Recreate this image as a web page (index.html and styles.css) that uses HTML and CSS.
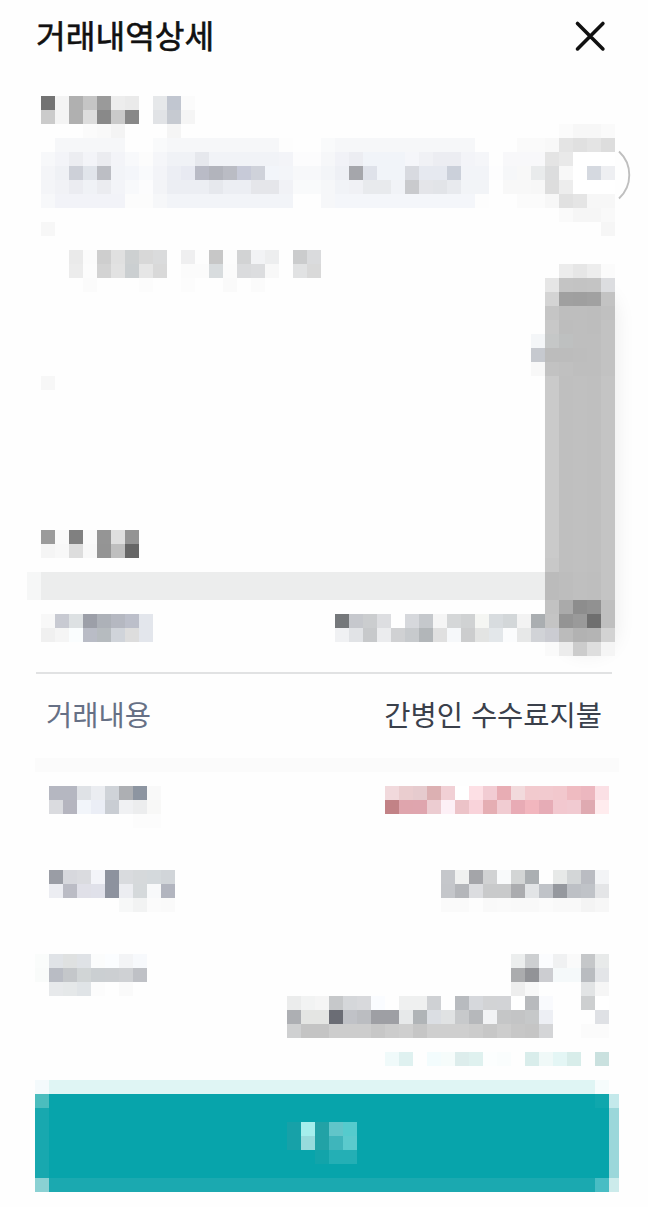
FILE: index.html
```html
<!DOCTYPE html>
<html lang="ko">
<head>
<meta charset="utf-8">
<title>거래내역상세</title>
<link rel="stylesheet" href="styles.css">
</head>
<body>
<main class="sheet">
  <header class="header">
    <h1 class="title">거래내역상세</h1>
    <svg class="close" viewBox="0 0 32 32" role="img" aria-label="닫기"><path d="M3.5 3.5 28.9 28.9M28.9 3.5 3.5 28.9"/></svg>
  </header>

  <section class="account">
    <svg class="mosaic" data-cells="73 f4 b0 c5 9a ed ea . e6e8ea c1c6d0 fb/cb f4 b0 dd 89 ca 88 . e1e3e6 c6cad1 f5/. . . fb f9 f4 . . . f5 ."></svg>
    <svg class="mosaic" data-cells="fb f7*2 fa"></svg>
  </section>

  <section class="tabs">
    <svg class="mosaic" data-cells=". f6f7f9*5 . . f9fafb f6f7f9*8 fd . . f9fafb f6f7f9*10 . . . fa*2 f8 e4 e0 e4 dd/f7f8fa f3f4f8 ecedf1 f3f4f8 ebecf0 f3f4f8 f8f9fb fc f5f6f9 f0f2f6*2 e6e8ed f1f3f7*5 f3f4f8 fcfcfd*2 f6f7f9 f1f2f7 ecedf2 f1f4f9*3 f5f6fa f0f1f5 ecedf2*2 f3f4f8 f5f6f9 . f8f8fa*3 e4 e9 ff*3/f4f5f8 eff1f5 cdd0d8 e1e5eb bcbec4 f2f4f8 f4f6fa f9fafc f3f4f8 eceef4 e8eaf2 b9bbc6 b2b4bc babcc4 c7cad8 cfd2da f2f5fa f3f5f9 f7f8fa*2 f3f5f8 eef0f5 a5a6ab dfe2ea f1f4f9*2 d8dae0 e6e9f0*2 cbd0da f2f4f8*2 fdfdfe f6f7f9 f8 e9ebec dcddde f8 ff d5d9e0 eeeff2/f4f5f8 f1f2f6 ebecf1 f0f2f6 ebecf0 f3f4f8 f8f9fb fcfcfd f3f4f7 eceef3*3 e6e8ed eceef3*2 e5e6ea*2 f1f2f6 f9fafb*2 f6f7f9 f1f3f7 f0f1f5 e8eaed*2 f1f3f7 c9cacd e4e5e9 e2e4e8 e8eaee f2f4f7*2 . f8*2 f7 dd ed ff*3/f7f8fa f2f3f8*5 fc*2 f6f7f9 f2f4f8*9 . . f6f7f9 f4f6fa*10 fd . . fb*2 f7 e1 e5 f7*2/.*37 fa f6*2 f9/f7 .*39 f6"></svg>
    <svg class="knob" viewBox="0 0 14 52" aria-hidden="true"><path d="M1 2.5A32 32 0 0 1 1 49.5"/></svg>
  </section>

  <section class="history">
    <svg class="mosaic chips" data-cells="ea fb ce e0 cdd0d1 d8 dadbdc . efeff0 fd c7 fc d2d3d4 f2f3f5 edeeef . cbcccd dadbdd/ec fc d3 e2 cbcfd1 e6 d9 . fb fb d8dcde fb dadbdd dcdddf f8 . e1e2e3 d9/. fb .*3 fc . . fc . . fa . fb .*4"></svg>
    <div class="amount">
      <svg class="mosaic" data-cells="./f7"></svg>
      <svg class="mosaic" data-cells="f4f6f8/c6c9cf/f8/."></svg>
    </div>
    <svg class="mosaic subtitle" data-cells="9b fa 80 fa 95 df 94/f5 f8 dd f8 94 bf 66"></svg>
  </section>

  <div class="band"></div>

  <section class="summary">
    <svg class="mosaic" data-cells="f8 c8cad2 dde1e3 9c9fa8 adb1b8 b5b8c1 bcbfca e3e6ec/f0 f5 fafdfe b9bcc6 b6bbbf d0d4da dd e3e6ec"></svg>
    <svg class="mosaic" data-cells="75787b c6c8cd cbcdcf dddee1 . d6d8dc c5c8cc f5 d5d7d8 d0d2d3 f5f6f3 d8dcdf d3d7d9 f3 aaaeb1/f0f1f3 e1e3e6 c7c9cb ebecee d0d1d3 c7cacd b2b6b9 e0 f6f8fa cccdce e3e4e3 e3e7ea fbfcfd e7e8e8 d1d3d7"></svg>
  </section>

  <div class="row memo">
    <span class="label">거래내용</span>
    <span class="value">간병인 수수료지불</span>
  </div>
  <div class="rule"></div>

  <div class="row">
    <svg class="mosaic" data-cells="b5b7c1*2 dfe2e6 ebedf1 cfd3d8 adafb3 8d95a1 f9/dadbdf b5b5bf f2f5fa ebeef6 c9cdd3 f0f1f3 ecedee f8f8f7/.*6 fc fc"></svg>
    <svg class="mosaic" data-cells="f1d9dc eacdcf e6cbce dcb0b2 f1d0d5 ff fde0e5 f2ccd3 e8adb4 f2dadc f2cace f2cacf f2c8cd efbbc1 ecb7bf fbe0e5/c28286 dfa5ad dfa5ae ecccd1 fdf0f6 ecc3c8 f9d3da e5aeb3 f1ccd2 e8abb5 f2b6be e6acb6 f2c8cf f1cad1 dfaab1 ffecee"></svg>
  </div>
  <div class="row">
    <svg class="mosaic" data-cells="9a9da5 d7d8dd dadbdf f3f4f9 8d929e d9dbde d6d9db d4d9dc d1d5d9/ecedf2 bbbcc5 e0e0e8 e0e1ea 8d929e ecedf1 d5d9db f8f9fa b2b5bf/.*5 f7f8f8 f2f3f3 fb fa"></svg>
    <svg class="mosaic" data-cells="c5c7cb f0f1f0 a4a5a9 d1d2d3 f9fafb d3d5d5 abafb2 . e7e9e8 d3d6d7 babcc2 f3f4f6/c4c6ca b4b6ba dcdde0 c9cacb*2 abacaf e2e4e6 c0c3c8 95989e bdc0c5 c0c3c8 e4e5e7/fa*2 fd f9 fa f9*2 fb f9*2 f4 f7"></svg>
  </div>
  <div class="row last">
    <svg class="mosaic outset" data-cells="fafcfb e0e3e7 dfe1e1 dfe2e6 fbfcfc fbfdff f3f4f6 f7f9fc/f9fbfa b9bcc4 c4c7ca d1d5d6 cbcfd2 cccfd2 cfd1d4 bfc1c6/. e7e9eb e5e8e9 e0e4e7 fc . fa ."></svg>
    <div class="stack">
      <svg class="mosaic" data-cells="eceeee cdcfd1 fbfcfe f0f1f2 fa c5c7c9 e8eaea/abacae 929397 cccdd1 f5f9fa*2 b9bcc0 e3e5e8/ee f8 .*3 e2e4e5 f6"></svg>
      <svg class="mosaic" data-cells="ebecec f2f3f3 f5 c6c8ca d5d7da d8d9dc fafcff . eff0f0*2 cfd1d4 . b8bbbf d6d8dc d2d3d5 d2d3d6 ff b8babd f9fafd . . cdcfd0 ff/adafb3 e4e5e3*2 6b6d75 c0c2c7 bbbdc1 9e9fa4*2 e7e9ea b0b4b7 dbdee3 e0e2e3 c7c9cb b6b8bb f2f3f5 c5c6c7 c3c4c5 c6c8c9 edeff4 .*3 dfe1e5/cfd0d1 c4*2 cd*3 c7 cc cf c6 cf*3 cc c7 cd c7 c5 d4d5d7 . . fb*2"></svg>
      <svg class="mosaic link" data-cells="f0fafa dff1f0 . f3fcfd f6fcfb ddedec dff1ef fcfefe fafdfd . d9edeb f0f9f8 e4f6f5 d8edea . cae1df"></svg>
    </div>
  </div>

  <div class="confirm">
    <svg class="mosaic" data-width="584" data-cells="f4fafc dff5f4*39 f6fcfc ./4bbdbe 07a4ab*39 0fa7ad c4e9eb/18a8af 07a4ab*40 9bd7da/18a8af 07a4ab*17 17a1a8 a5eeec 22a2a6 61c5c9 55cbcd 07a4ab*18 9bd7da/18a8af 07a4ab*17 17a1a8 97dbdc 22a2a6 3fb5bb 5bcacd 07a4ab*18 9bd7da/18a8af 07a4ab*19 12a4aa 24afb5*2 07a4ab*18 9bd7da/18a8af 07a4ab*40 9bd7da/8ad1d3 1ba9b0*39 48bdc4 ccebeb"></svg>
  </div>

  <div class="handle">
    <svg class="mosaic" data-cells=". ec e6 ed fb/e6 c4 c3 c4 dcdde0/d4 a0 9f a1 c3/c5 be be bd c0/c8 bd be bd c2/c5c7c7 bec0c0 be be c2/bc bc bd be c2/c2 c0 be be c2/ca bf c0 bf c4/ca bf c0 bf c4/ca bf c0 bf c4/ca bf c0 bf c4/ca bf c0 bf c4/ca bf c0 bf c4/ca bf c0 bf c4/ca bf c0 bf c4/ca bf c0 bf c4/ca bf c0 bf c4/ca bf c0 bf c4/ca bf c0 bf c4/ca bf c0 bf c4/c8 bf c0 bf c4/bb bd bf be c4/bb bd bf be c4/c2 aa 8d 91 bf/c4 94 9a 6f bf/cbccd2 bb b2 b4 d3/fa ec cc de f5"></svg>
  </div>
</main>
<script src="mosaic.js"></script>
</body>
</html>
```
FILE: styles.css
```css
* { box-sizing: border-box; }

body {
  margin: 0;
  background: #fefefe;
  font-family: "Noto Sans CJK KR", sans-serif;
}

.sheet {
  position: relative;
  width: 648px;
  height: 1207px;
  overflow: hidden;
}

.mosaic {
  display: block;
  flex: none;
}

.header {
  display: flex;
  justify-content: space-between;
  align-items: center;
  height: 72px;
  padding: 0 42px 0 36px;
}

.title {
  margin: 0;
  padding-bottom: 4px;
  font-size: 32.3px;
  line-height: 48px;
  font-weight: 400;
  -webkit-text-stroke: 0.6px #111;
  color: #111;
}

.close {
  width: 32px;
  height: 32px;
  fill: none;
  stroke: #111;
  stroke-width: 3.6;
  stroke-linecap: round;
}

.account {
  display: flex;
  justify-content: space-between;
  align-items: flex-end;
  height: 66px;
  padding: 0 33px 0 41px;
}

.tabs {
  display: flex;
  height: 98px;
  padding-left: 41px;
}

.knob {
  width: 14px;
  height: 52px;
  margin: 11px 0 0 3px;
  fill: none;
  stroke: #bfbfbf;
  stroke-width: 1.9;
}

.history {
  display: flex;
  flex-direction: column;
  height: 336px;
  padding: 14px 103px 14px 41px;
}

.chips { margin-left: 28px; }

.amount {
  display: flex;
  justify-content: space-between;
  align-items: flex-end;
  margin-top: 42px;
}

.subtitle { margin-top: auto; }

.band {
  height: 28px;
  margin: 0 103px 0 27px;
  border-left: 14px solid #f6f7f7;
  background: #eceded;
}

.summary {
  display: flex;
  justify-content: space-between;
  height: 72px;
  margin: 0 36px;
  padding: 14px 67px 0 5px;
}

.row {
  display: flex;
  justify-content: space-between;
  height: 84px;
  padding: 0 39px 0 49px;
}

.memo {
  align-items: center;
  height: 86px;
  margin: 0 36px;
  padding: 0 10px 4px;
  border-top: 2px solid #e1e2e3;
  font-size: 28.5px;
  line-height: 42px;
}

.label { color: #667085; }

.value { color: #3a404b; }

.rule {
  height: 14px;
  margin: 0 29px 14px 35px;
  background: #fbfbfb;
}

.last { height: 126px; }

.outset { margin-left: -14px; }

.stack {
  display: flex;
  flex-direction: column;
  align-items: flex-end;
}

.link { margin-top: 14px; }

.confirm { padding-left: 35px; }

.handle {
  position: absolute;
  left: 545px;
  top: 264px;
}

.handle::before {
  content: "";
  position: absolute;
  inset: 28px 4px 12px 20px;
  border-radius: 20px;
  box-shadow: 0 4px 20px 5px rgba(0, 0, 0, 0.08);
}

.handle .mosaic { position: relative; }
```
FILE: mosaic.js
```js
// Expands data-cells into 14px squares: rows split by "/", "xx*n" repeats a cell, "." is empty.
const SIZE = 14;
const NS = "http://www.w3.org/2000/svg";

document.querySelectorAll(".mosaic").forEach((svg) => {
  const rows = svg.dataset.cells.split("/");
  let columns = 0;
  rows.forEach((row, y) => {
    let x = 0;
    row.trim().split(/\s+/).forEach((token) => {
      const [color, repeat] = token.split("*");
      const count = Number(repeat || 1);
      if (color !== ".") {
        const rect = document.createElementNS(NS, "rect");
        rect.setAttribute("x", x * SIZE);
        rect.setAttribute("y", y * SIZE);
        rect.setAttribute("width", count * SIZE);
        rect.setAttribute("height", SIZE);
        rect.setAttribute("fill", "#" + (color.length === 2 ? color.repeat(3) : color));
        svg.appendChild(rect);
      }
      x += count;
    });
    columns = Math.max(columns, x);
  });
  svg.setAttribute("width", svg.dataset.width || columns * SIZE);
  svg.setAttribute("height", rows.length * SIZE);
  svg.setAttribute("shape-rendering", "crispEdges");
  svg.setAttribute("aria-hidden", "true");
});
```
